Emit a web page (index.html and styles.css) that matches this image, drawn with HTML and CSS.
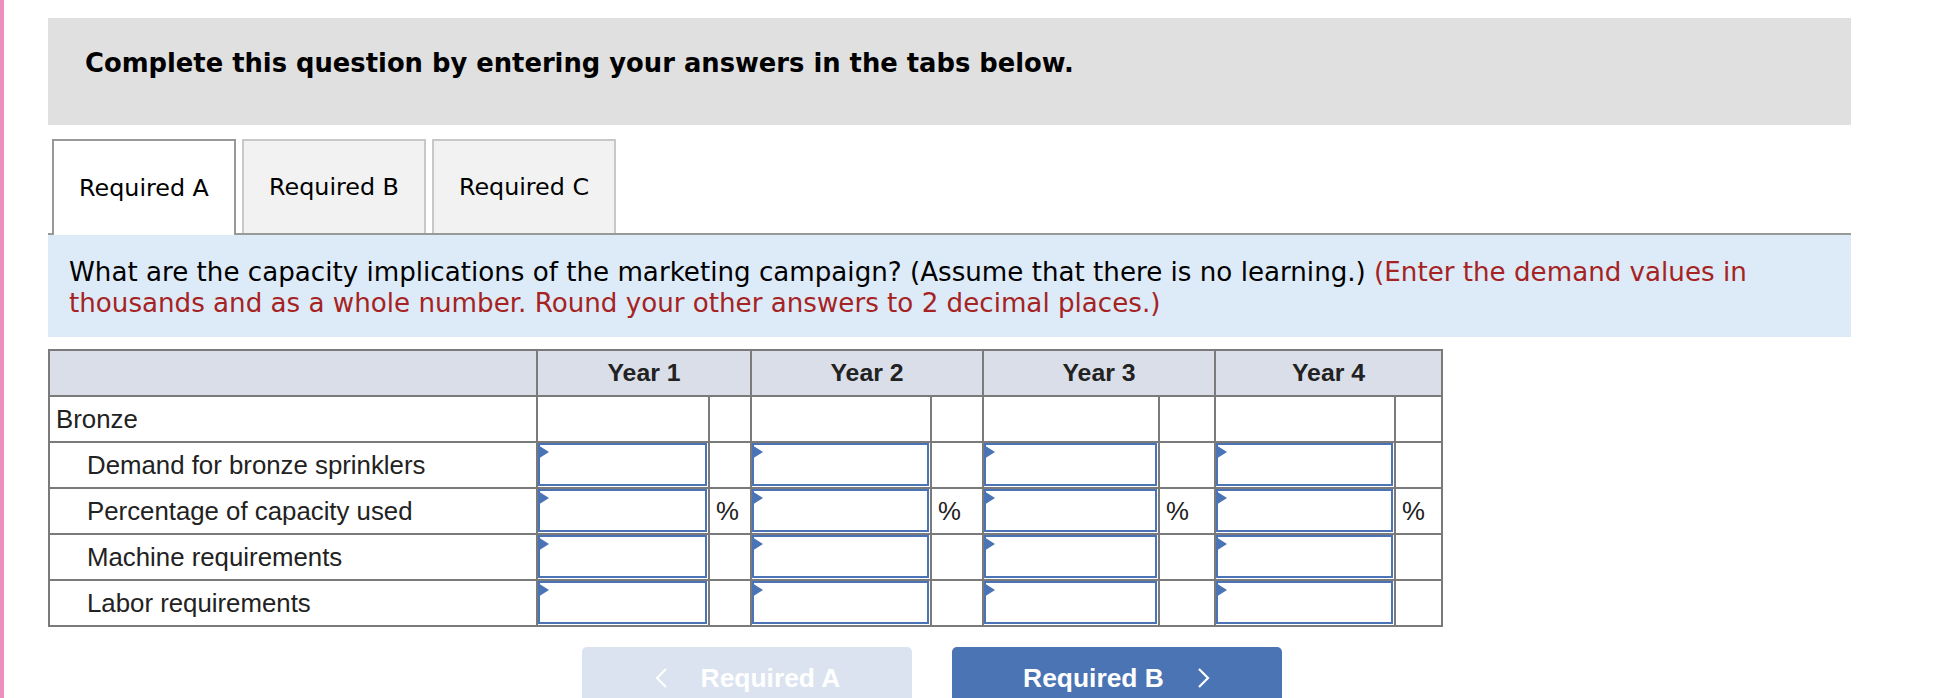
FILE: index.html
```html
<!DOCTYPE html>
<html lang="en">
<head>
<meta charset="utf-8">
<title>Capacity implications</title>
<link rel="stylesheet" href="styles.css">
</head>
<body>
<div class="page">
  <div class="header">
    <h1 class="title">Complete this question by entering your answers in the tabs below.</h1>
  </div>

  <div class="tabs">
    <div class="tab active">Required A</div>
    <div class="tab">Required B</div>
    <div class="tab">Required C</div>
  </div>

  <p class="question">What are the capacity implications of the marketing campaign? (Assume that there is no learning.) <span class="hint">(Enter the demand values in thousands and as a whole number. Round your other answers to 2 decimal places.)</span></p>

  <table class="grid">
    <colgroup>
      <col class="c-label">
      <col class="c-in1"><col class="c-p1">
      <col class="c-in2"><col class="c-p2">
      <col class="c-in3"><col class="c-p3">
      <col class="c-in4"><col class="c-p4">
    </colgroup>
    <thead>
      <tr>
        <th class="blank"></th>
        <th colspan="2">Year 1</th>
        <th colspan="2">Year 2</th>
        <th colspan="2">Year 3</th>
        <th colspan="2">Year 4</th>
      </tr>
    </thead>
    <tbody>
      <tr>
        <td class="label">Bronze</td>
        <td></td><td></td>
        <td></td><td></td>
        <td></td><td></td>
        <td></td><td></td>
      </tr>
      <tr>
        <td class="label indent">Demand for bronze sprinklers</td>
        <td class="in"><div class="box"></div></td><td class="pct"></td>
        <td class="in"><div class="box"></div></td><td class="pct"></td>
        <td class="in"><div class="box"></div></td><td class="pct"></td>
        <td class="in"><div class="box"></div></td><td class="pct"></td>
      </tr>
      <tr>
        <td class="label indent">Percentage of capacity used</td>
        <td class="in"><div class="box"></div></td><td class="pct">%</td>
        <td class="in"><div class="box"></div></td><td class="pct">%</td>
        <td class="in"><div class="box"></div></td><td class="pct">%</td>
        <td class="in"><div class="box"></div></td><td class="pct">%</td>
      </tr>
      <tr>
        <td class="label indent">Machine requirements</td>
        <td class="in"><div class="box"></div></td><td class="pct"></td>
        <td class="in"><div class="box"></div></td><td class="pct"></td>
        <td class="in"><div class="box"></div></td><td class="pct"></td>
        <td class="in"><div class="box"></div></td><td class="pct"></td>
      </tr>
      <tr>
        <td class="label indent">Labor requirements</td>
        <td class="in"><div class="box"></div></td><td class="pct"></td>
        <td class="in"><div class="box"></div></td><td class="pct"></td>
        <td class="in"><div class="box"></div></td><td class="pct"></td>
        <td class="in"><div class="box"></div></td><td class="pct"></td>
      </tr>
    </tbody>
  </table>

  <div class="nav">
    <div class="btn btn-prev">
      <svg class="chev" width="14" height="22" viewBox="0 0 14 22"><polyline points="12,2 3,11 12,20" fill="none" stroke="#fff" stroke-width="2.2"/></svg>
      <span>Required A</span>
    </div>
    <div class="btn btn-next">
      <span>Required B</span>
      <svg class="chev" width="14" height="22" viewBox="0 0 14 22"><polyline points="2,2 11,11 2,20" fill="none" stroke="#fff" stroke-width="2.2"/></svg>
    </div>
  </div>
</div>
</body>
</html>
```

FILE: styles.css
```css
html, body {
  margin: 0;
  padding: 0;
  background: #ffffff;
}

body {
  height: 698px;
  overflow: hidden;
  border-left: 4px solid #ec8fbe;
  box-sizing: border-box;
}

.page {
  margin-left: 44px;
  padding-top: 18px;
  width: 1803px;
}

.header {
  background: #e0e0e0;
  height: 107px;
  box-sizing: border-box;
  padding: 29px 37px 0 37px;
}

.title {
  margin: 0;
  font-family: "DejaVu Sans", Verdana, sans-serif;
  font-weight: bold;
  font-size: 25.8px;
  line-height: 32px;
  color: #000;
}

.tabs {
  display: flex;
  margin-top: 14px;
  padding-left: 4px;
  height: 94px;
  border-bottom: 2px solid #999999;
}

.tab {
  width: 184px;
  height: 94px;
  box-sizing: border-box;
  border: 2px solid #c8c8c8;
  border-bottom: 0;
  background: #f2f2f2;
  margin-right: 6px;
  display: flex;
  align-items: center;
  justify-content: center;
  font-family: "DejaVu Sans", Verdana, sans-serif;
  font-size: 23.8px;
  color: #000;
}

.tab.active {
  height: 96px;
  background: #ffffff;
  border-color: #999999;
  position: relative;
  z-index: 1;
}

.question {
  margin: 0;
  background: #ddeaf7;
  height: 102px;
  box-sizing: border-box;
  padding: 22px 21px 0 21px;
  font-family: "DejaVu Sans", Verdana, sans-serif;
  font-size: 26.15px;
  line-height: 31px;
  color: #000;
}

.hint {
  color: #a52323;
}

.grid {
  margin-top: 12px;
  width: 1395px;
  table-layout: fixed;
  border-collapse: separate;
  border-spacing: 0;
  border-top: 2px solid #7a7a7a;
  border-left: 2px solid #7a7a7a;
  font-family: "Liberation Sans", Arial, sans-serif;
  color: #222;
}

.c-label { width: 488px; }
.c-in1 { width: 172px; }
.c-p1 { width: 42px; }
.c-in2 { width: 180px; }
.c-p2 { width: 52px; }
.c-in3 { width: 176px; }
.c-p3 { width: 56px; }
.c-in4 { width: 180px; }
.c-p4 { width: 47px; }

.grid th,
.grid td {
  border-right: 2px solid #7a7a7a;
  border-bottom: 2px solid #7a7a7a;
  height: 44px;
  padding: 0;
  vertical-align: middle;
}

.grid th {
  background: #d9dee8;
  font-weight: bold;
  font-size: 24.8px;
  text-align: center;
  color: #222;
}

.grid td {
  font-size: 25.8px;
  background: #fff;
}

.label {
  padding-left: 6px !important;
  text-align: left;
}

.label.indent {
  padding-left: 37px !important;
}

.in {
  vertical-align: top !important;
}

.box {
  position: relative;
  box-sizing: border-box;
  width: calc(100% - 1px);
  height: 43px;
  border: 2px solid #4a74b6;
  background: #fff;
}

.box::before {
  content: "";
  position: absolute;
  left: -2px;
  top: 0;
  width: 0;
  height: 0;
  border-left: 11px solid #4a74b6;
  border-top: 7px solid transparent;
  border-bottom: 7px solid transparent;
}

.pct {
  padding-left: 6px !important;
}

.nav {
  display: flex;
  gap: 40px;
  margin-top: 20px;
  padding-left: 534px;
}

.btn {
  width: 330px;
  height: 62px;
  border-radius: 5px;
  display: flex;
  align-items: center;
  justify-content: center;
  gap: 33px;
  font-family: "Liberation Sans", Arial, sans-serif;
  font-weight: bold;
  font-size: 26.4px;
  color: #fff;
}

.btn-prev {
  background: #dae3ef;
}

.btn-next {
  background: #4a74b4;
}

.chev {
  display: block;
}
```
